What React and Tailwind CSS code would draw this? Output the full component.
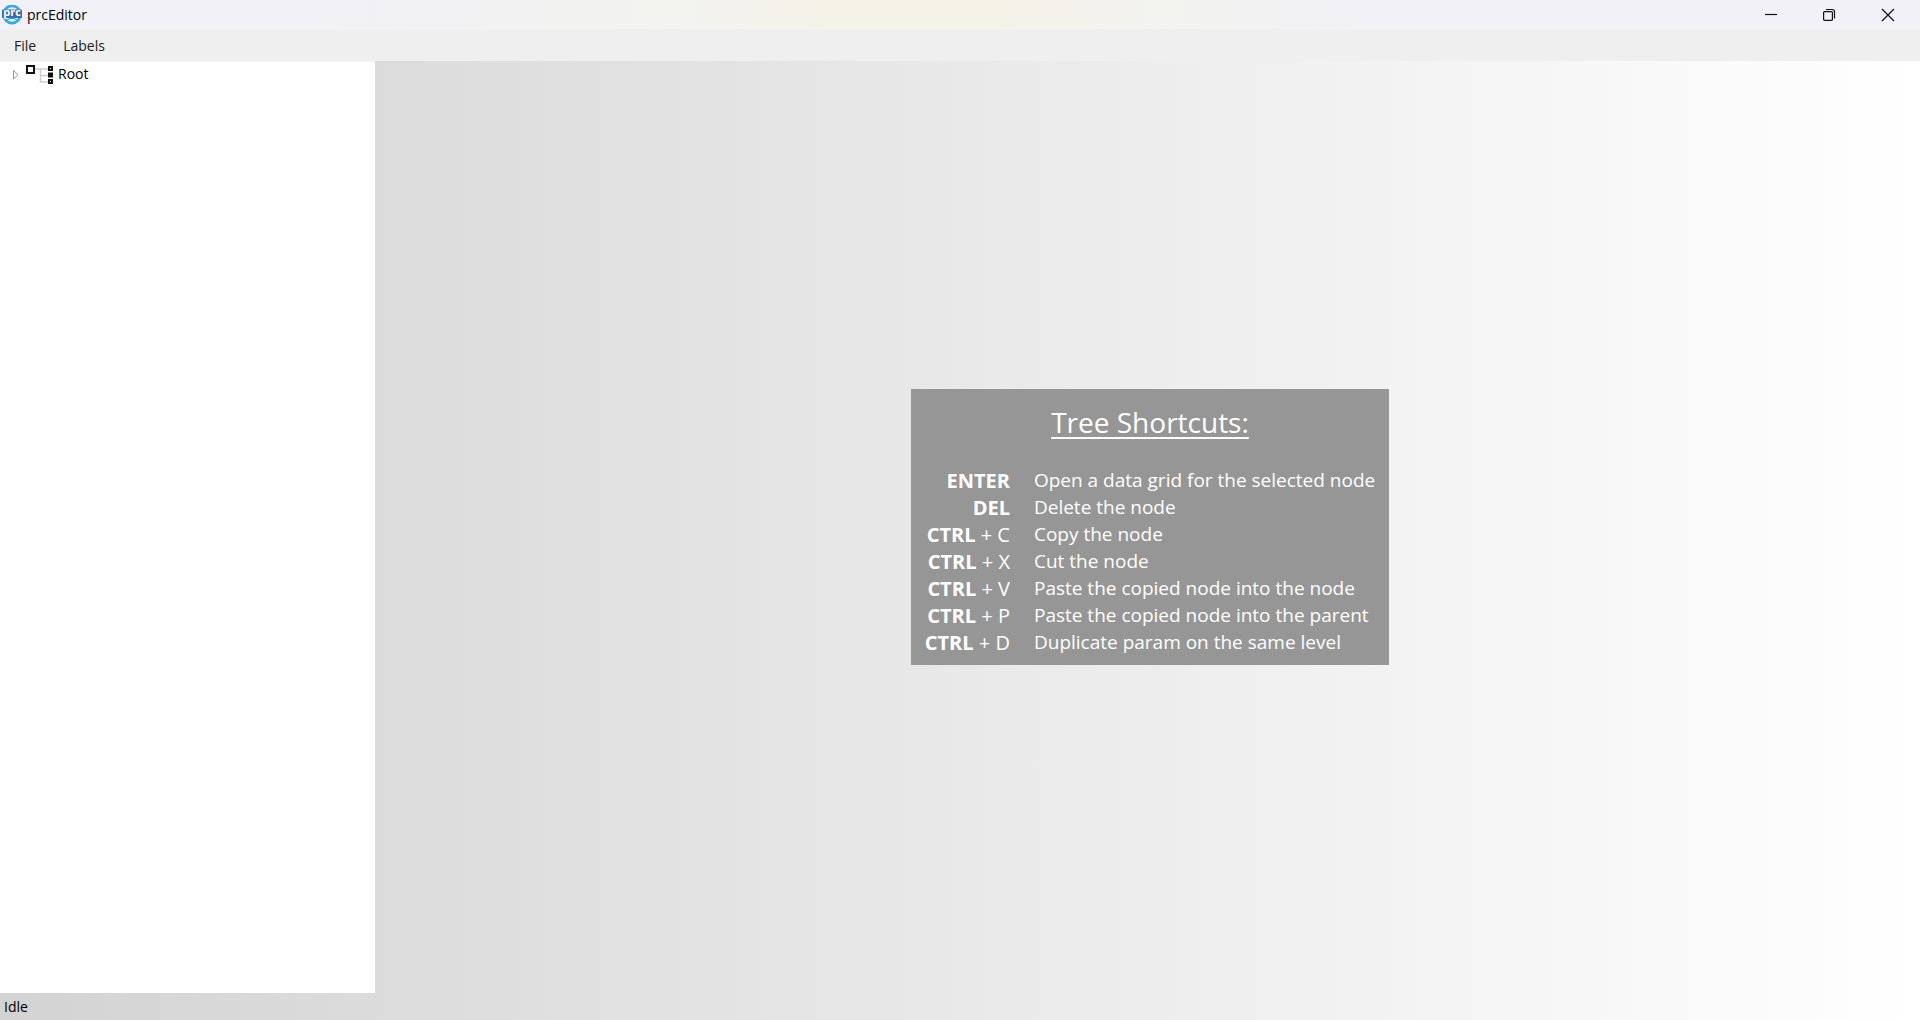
import React from 'react';

const shortcuts = [
    { key: 'ENTER', text: 'Open a data grid for the selected node' },
    { key: 'DEL', text: 'Delete the node' },
    { key: 'CTRL', extra: 'C', text: 'Copy the node' },
    { key: 'CTRL', extra: 'X', text: 'Cut the node' },
    { key: 'CTRL', extra: 'V', text: 'Paste the copied node into the node' },
    { key: 'CTRL', extra: 'P', text: 'Paste the copied node into the parent' },
    { key: 'CTRL', extra: 'D', text: 'Duplicate param on the same level' }
];

const AppLogo = () => (
    <svg width="20" height="20" viewBox="0 0 20 20" className="shrink-0" aria-hidden="true">
        <circle cx="10" cy="9.5" r="8.6" fill="#e4eff7" stroke="#35a9e4" strokeWidth="2.6" />
        <path d="M4 15.5L8 13.5H12L16 15.5" fill="none" stroke="#35a9e4" strokeWidth="1.2" />
        <rect x="0" y="4.5" width="20" height="8.5" rx="1" fill="#3f6ba8" />
        <text x="10" y="11" textAnchor="middle" fontSize="11" fontWeight="700" fill="#fff">prc</text>
    </svg>
);

const StructIcon = () => (
    <svg width="28" height="20" viewBox="0 0 28 20" className="shrink-0" aria-hidden="true">
        <path d="M9 5H22M14.5 5V18H22M14.5 11.5H22" fill="none" stroke="#cfcfcf" strokeWidth="1.5" />
        <rect x="1" y="2" width="7" height="7" fill="#fff" stroke="#111" strokeWidth="2" />
        <g fill="#fff" stroke="#111" strokeWidth="2">
            <rect x="23" y="3" width="3" height="3" />
            <rect x="23" y="9.5" width="3" height="3" />
            <rect x="23" y="16" width="3" height="3" />
        </g>
    </svg>
);

const WindowButton = ({ label, children }) => (
    <button aria-label={label} className="flex h-full w-[58px] items-center justify-center hover:bg-black/5">
        <svg width="14" height="14" viewBox="0 0 14 14" fill="none" stroke="#111" strokeWidth="1.2" aria-hidden="true">
            {children}
        </svg>
    </button>
);

const TitleBar = () => (
    <header className="flex h-[29px] items-center bg-[linear-gradient(to_right,#f1f1f7_15%,#f3f3ef_36%,#f5f2e8_43%,#f5f2e8_52%,#f3f3ef_60%,#f1f1f7_72%)] pl-[2px]">
        <AppLogo />
        <h1 className="ml-[5px] flex-1 text-sm">prcEditor</h1>
        <div className="flex h-full pr-[3px]">
            <WindowButton label="Minimize">
                <path d="M0 6.5H12" />
            </WindowButton>
            <WindowButton label="Restore">
                <rect x="0.6" y="3.6" width="8.8" height="8.8" rx="1" />
                <path d="M3 1.5H9A2.5 2.5 0 0 1 11.5 4V10.5" />
            </WindowButton>
            <WindowButton label="Close">
                <path d="M1 1L13 13M13 1L1 13" />
            </WindowButton>
        </div>
    </header>
);

const MenuBar = () => (
    <nav className="flex h-8 items-center bg-[#efefef] pt-[2px] text-sm text-[#212121]">
        <button className="px-[14px]">File</button>
        <button className="px-[13px]">Labels</button>
    </nav>
);

const TreePane = () => (
    <aside className="w-[375px] shrink-0 border-t border-[#f4f4f4] bg-white">
        <ul>
            <li className="flex h-6 items-center pl-[12px] text-sm">
                <button aria-label="Expand Root">
                    <svg width="8" height="12" viewBox="0 0 8 12" aria-hidden="true">
                        <path d="M1.5 2.5V11L6 6.7Z" fill="#fff" stroke="#999" />
                    </svg>
                </button>
                <span className="ml-[6px] flex items-center gap-1">
                    <StructIcon />
                    Root
                </span>
            </li>
        </ul>
    </aside>
);

const ShortcutCard = () => (
    <section className="bg-[#969696] px-[14px] pt-3 pb-[9px] text-white">
        <h2 className="mb-6 text-center text-[28px] leading-[42px] underline decoration-2 underline-offset-4">Tree Shortcuts:</h2>
        <table className="text-[19px] leading-[27px]">
            <tbody>
                {shortcuts.map(({ key, extra, text }) => (
                    <tr key={text}>
                        <th scope="row" className="p-0 pr-6 text-right text-[20px] leading-[27px] font-normal whitespace-nowrap">
                            <b className="font-bold">{key}</b>
                            {extra && ` + ${extra}`}
                        </th>
                        <td className="p-0 whitespace-nowrap">{text}</td>
                    </tr>
                ))}
            </tbody>
        </table>
    </section>
);

export default function App() {
    return (
        <div className="flex min-h-screen flex-col bg-linear-to-r from-[#d3d3d3] to-white font-['Open_Sans','Noto_Sans',sans-serif] text-black">
            <TitleBar />
            <MenuBar />
            <div className="flex flex-1">
                <TreePane />
                <main className="flex flex-1 items-center justify-center pl-[5px]">
                    <ShortcutCard />
                </main>
            </div>
            <footer className="flex h-[27px] items-center pl-1 text-sm">Idle</footer>
        </div>
    );
}
